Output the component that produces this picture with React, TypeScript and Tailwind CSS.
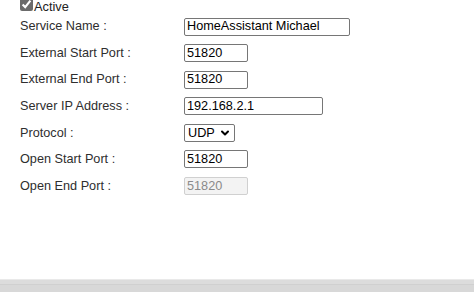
import { ChevronDown } from 'lucide-react'

const rows: { label: string; kind: 'text' | 'select' | 'disabled'; value: string; w: string }[] = [
  { label: 'Service Name :', kind: 'text', value: 'HomeAssistant Michael', w: 'w-[166px]' },
  { label: 'External Start Port :', kind: 'text', value: '51820', w: 'w-[64px]' },
  { label: 'External End Port :', kind: 'text', value: '51820', w: 'w-[64px]' },
  { label: 'Server IP Address :', kind: 'text', value: '192.168.2.1', w: 'w-[139px]' },
  { label: 'Protocol :', kind: 'select', value: 'UDP', w: 'w-[51px]' },
  { label: 'Open Start Port :', kind: 'text', value: '51820', w: 'w-[64px]' },
  { label: 'Open End Port :', kind: 'disabled', value: '51820', w: 'w-[64px]' },
]

export default function App() {
  return (
    <div className="h-[292px] w-[474px] flex flex-col overflow-hidden bg-white font-['Liberation_Sans',Arial,sans-serif] text-[12.7px]">
      <div className="flex-1 pl-[20px]">
        {/* Active toggle, scrolled half out of view */}
        <label className="flex items-center h-[14px] -mt-[3px] text-[#222]">
          <input
            type="checkbox"
            defaultChecked
            className="m-0 w-[13px] h-[13px] accent-[#6b6b6b]"
          />
          <span className="ml-[1px] mt-[6px] leading-none text-[12.8px]">Active</span>
        </label>

        <div className="mt-[6px] flex flex-col gap-[7.6px]">
          {rows.map(r => (
            <div key={r.label} className="grid grid-cols-[164px_auto] items-center h-[19px]">
              <span className="text-[#2e2e2e] leading-none">{r.label}</span>
              {r.kind === 'select' ? (
                <div className={`relative ${r.w} h-[18px]`}>
                  <select
                    defaultValue={r.value}
                    className="appearance-none w-full h-full border border-[#767676] rounded-[2px] bg-white pl-[3px] text-[12.7px] leading-none text-black outline-none"
                  >
                    <option>UDP</option>
                    <option>TCP</option>
                    <option>BOTH</option>
                  </select>
                  <ChevronDown
                    className="absolute right-[4px] top-[3px] w-[12px] h-[12px] pointer-events-none text-black"
                    strokeWidth={4}
                  />
                </div>
              ) : (
                <input
                  type="text"
                  defaultValue={r.value}
                  disabled={r.kind === 'disabled'}
                  className={
                    r.kind === 'disabled'
                      ? `${r.w} h-[18px] border border-[#d0d0d0] rounded-[2px] bg-[#f3f3f3] px-[2px] text-[12.7px] text-[#8a8a8a] outline-none`
                      : `${r.w} h-[18px] border border-[#767676] rounded-[2px] bg-white px-[2px] text-[12.7px] text-black outline-none`
                  }
                />
              )}
            </div>
          ))}
        </div>
      </div>

      {/* bottom scroll strip */}
      <div className="h-[13px] border-t border-[#e9e9e9] bg-[#d8d8d8] flex flex-col">
        <div className="h-[5px] bg-[#dcdcdc] border-b border-[#d0d0d0]" />
      </div>
    </div>
  )
}
